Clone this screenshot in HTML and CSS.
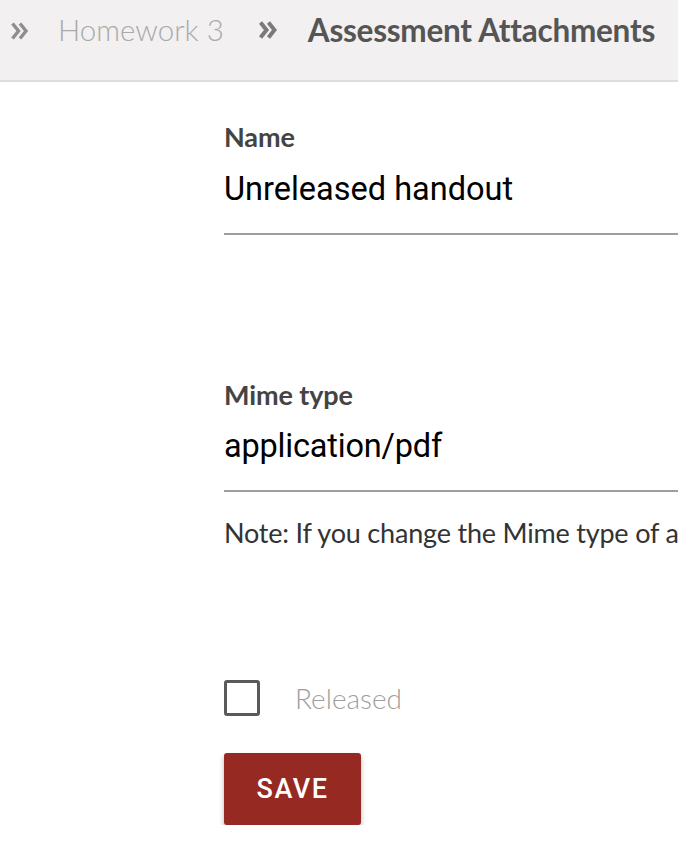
FILE: index.html
```html
<!DOCTYPE html>
<html>
<head>
<meta charset="utf-8">
<link rel="stylesheet" href="styles.css">
</head>
<body>
<nav class="crumbs">
  <svg class="sep sep-light" width="17" height="18" viewBox="0 0 17 18"><path d="M1.5 1.5 L7.5 9 L1.5 16.5 M9 1.5 L15 9 L9 16.5" fill="none" stroke="currentColor" stroke-width="3.4" stroke-linejoin="miter"/></svg>
  <span class="crumb">Homework 3</span>
  <svg class="sep sep-dark" width="18" height="18" viewBox="0 0 18 18"><path d="M1.5 1.5 L7.5 9 L1.5 16.5 M9.5 1.5 L15.5 9 L9.5 16.5" fill="none" stroke="currentColor" stroke-width="4" stroke-linejoin="miter"/></svg>
  <span class="crumb current">Assessment Attachments</span>
</nav>
<main class="form">
  <div class="field">
    <label class="label">Name</label>
    <div class="input">Unreleased handout</div>
  </div>
  <div class="field field-mime">
    <label class="label">Mime type</label>
    <div class="input">application/pdf</div>
    <p class="note">Note: If you change the Mime type of an attachment, the file will need to be re-uploaded.</p>
  </div>
  <div class="check">
    <span class="box"></span>
    <span class="check-label">Released</span>
  </div>
  <button class="save">SAVE</button>
</main>
</body>
</html>
```
FILE: styles.css
```css
html, body {
  margin: 0;
  padding: 0;
  background: #fff;
  overflow: hidden;
}
body {
  font-family: "Lato", "Open Sans", sans-serif;
  width: 678px;
}
.crumbs {
  display: flex;
  align-items: center;
  box-sizing: border-box;
  height: 82px;
  padding: 0 0 20px 11px;
  border-bottom: 2px solid #dedcdd;
  background: #f2f0f1;
  white-space: nowrap;
  line-height: 42px;
}
.sep {
  flex: none;
}
.sep-light { color: #8e8e8e; margin-right: 30px; margin-top: 1px; }
.sep-dark { color: #7a7a7a; margin: 0 31px 0 35px; }
.crumb {
  color: #aaa;
  font-weight: 300;
  font-size: 29.5px;
}
.crumb.current {
  color: #555;
  font-weight: 700;
  font-size: 31.5px;
  letter-spacing: -0.25px;
}
.form {
  padding-left: 224px;
  padding-top: 37px;
  white-space: nowrap;
}
.field {
  display: flex;
  flex-direction: column;
}
.label {
  font-size: 27px;
  font-weight: 700;
  color: #444;
  line-height: 36px;
  letter-spacing: -0.1px;
}
.input {
  font-family: "Roboto", "Liberation Sans", sans-serif;
  font-size: 32.5px;
  color: #000;
  line-height: 40px;
  padding: 14px 0 24px;
  border-bottom: 2px solid #9e9e9e;
  margin-right: -40px;
}
.field-mime {
  margin-top: 142px;
}
.field-mime .input {
  padding-top: 13px;
  padding-bottom: 24px;
  letter-spacing: -0.2px;
}
.note {
  margin: 23px 0 0;
  font-size: 27px;
  color: #333;
  line-height: 36px;
  letter-spacing: -0.2px;
}
.check {
  display: flex;
  align-items: center;
  margin-top: 129px;
}
.box {
  box-sizing: border-box;
  width: 36px;
  height: 36px;
  border: 3.5px solid #5a5a5a;
  border-radius: 3px;
}
.check-label {
  margin-left: 35px;
  font-size: 28px;
  font-weight: 300;
  color: #9e9e9e;
}
.save {
  display: block;
  margin-top: 37px;
  width: 137px;
  height: 72px;
  background: #962921;
  color: #fff;
  border: none;
  border-radius: 3px;
  font-family: "Roboto", sans-serif;
  font-weight: 500;
  font-size: 27px;
  letter-spacing: 1.5px;
  box-shadow: 0 3px 5px rgba(0,0,0,0.3);
}
```
